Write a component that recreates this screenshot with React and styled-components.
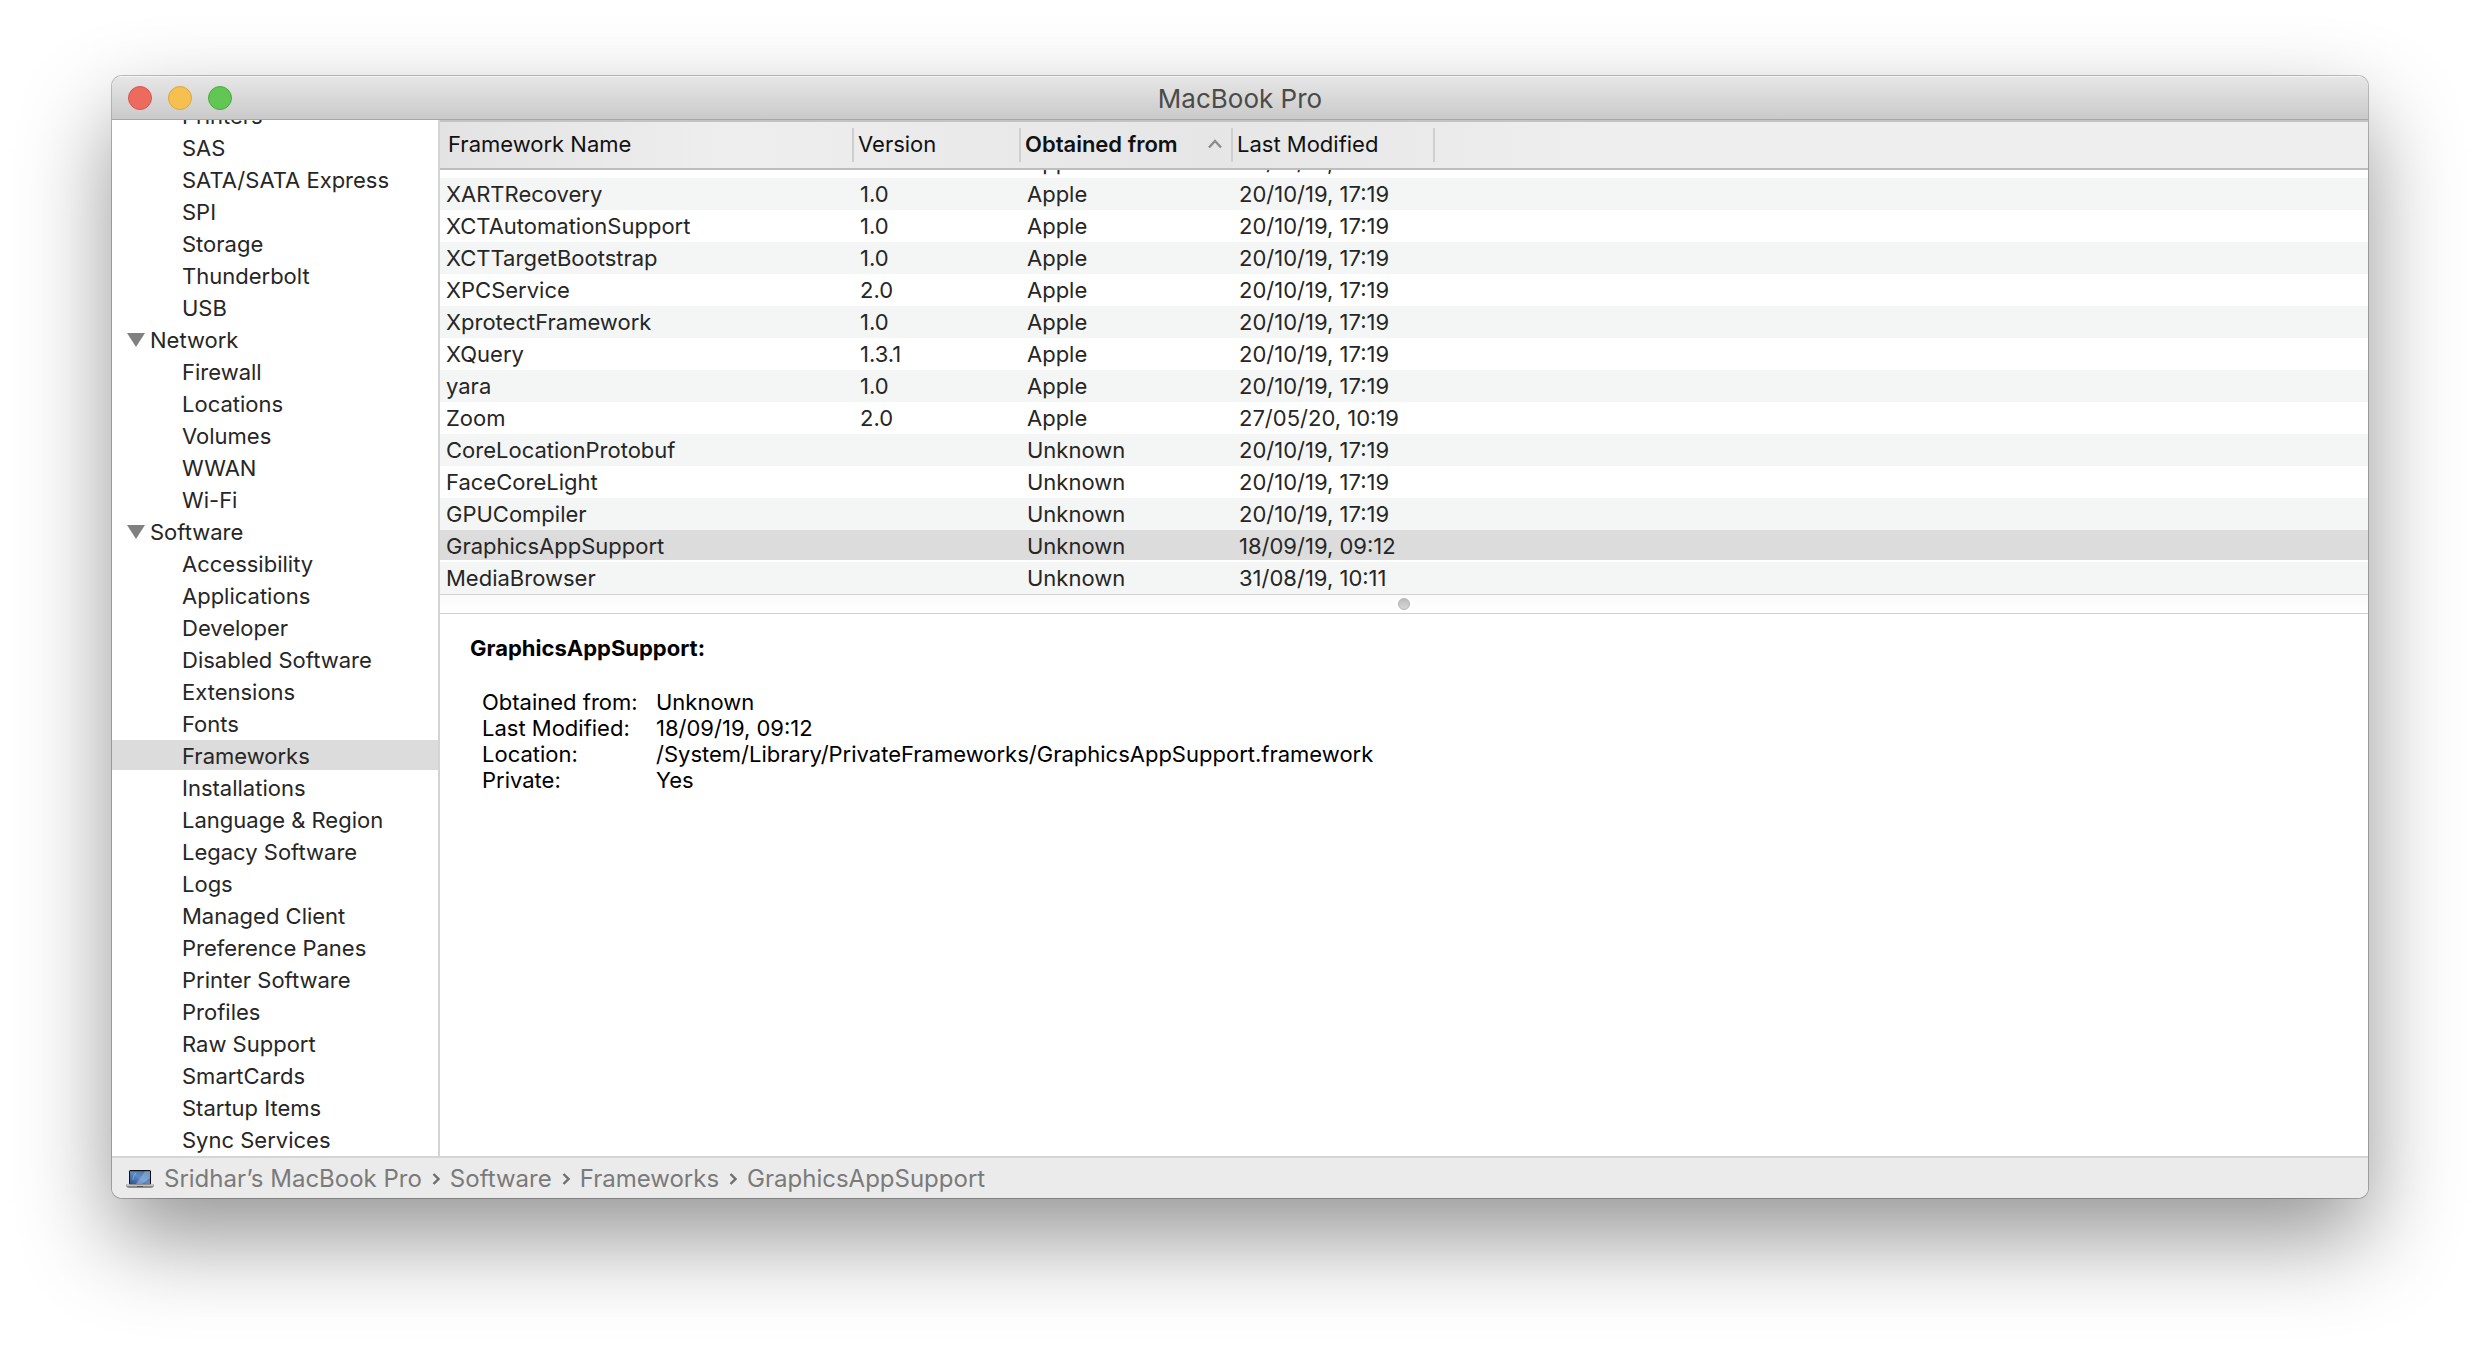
import React from "react";
import styled, { createGlobalStyle, css } from "styled-components";

const GlobalStyle = createGlobalStyle`
  *, *::before, *::after { box-sizing: border-box; }
  body {
    margin: 0;
    background: #fff;
    font-family: Inter, "Noto Sans", sans-serif;
    font-size: 22px;
    line-height: 32px;
    color: #262626;
  }
  button {
    font: inherit;
    color: inherit;
    background: none;
    border: 0;
    padding: 0;
    text-align: left;
  }
  ul, ol, dl, dd, h1, h2 { margin: 0; padding: 0; list-style: none; }
`;

const Desktop = styled.div`
  display: flex;
  height: 100vh;
  min-height: 600px;
  padding: 76px 112px 148px;
  overflow: hidden;
`;

const Window = styled.div`
  flex: 1;
  min-width: 0;
  display: flex;
  flex-direction: column;
  border-radius: 10px;
  background: #fff;
  overflow: hidden;
  box-shadow: 0 0 0 1px rgba(0, 0, 0, 0.24), 0 40px 92px rgba(0, 0, 0, 0.42);
`;

const TitleBar = styled.header`
  flex: none;
  display: grid;
  grid-template-columns: 1fr auto 1fr;
  align-items: center;
  height: 44px;
  padding: 0 16px;
  background: linear-gradient(#e6e6e6, #cacaca);
  border-top: 1px solid #f4f4f4;
  border-bottom: 1px solid #a6a6a6;
`;

const Lights = styled.div`
  display: flex;
  gap: 16px;
`;

const Light = styled.button`
  width: 24px;
  height: 24px;
  border-radius: 50%;
  background: ${(p) => p.$fill};
  border: 1px solid ${(p) => p.$edge};
`;

const Title = styled.h1`
  padding-top: 2px;
  font-size: 26px;
  font-weight: 400;
  color: #4a4a4a;
`;

const Body = styled.div`
  flex: 1;
  min-height: 0;
  display: flex;
`;

const Sidebar = styled.nav`
  flex: none;
  width: 328px;
  display: flex;
  flex-direction: column;
  justify-content: flex-end;
  overflow: hidden;
  border-right: 2px solid #d4d4d4;
`;

const SideItem = styled.button`
  display: block;
  width: 100%;
  height: 32px;
  padding-left: 70px;
  border-bottom: 2px solid #fff;
  line-height: 32px;
  white-space: nowrap;
  ${(p) => p.$active && css`background: #dcdcdc;`}
`;

const SideGroup = styled(SideItem)`
  display: flex;
  align-items: center;
  gap: 5px;
  padding-left: 15px;
  border-bottom: 0;
`;

const Main = styled.main`
  flex: 1;
  min-width: 0;
  display: flex;
  flex-direction: column;
`;

const Table = styled.table`
  flex: none;
  display: flex;
  flex-direction: column;
  height: 474px;
`;

const Columns = css`
  display: grid;
  grid-template-columns: 414px 167px 212px 202px 1fr;
`;

const Head = styled.thead`
  flex: none;
  display: block;
  border-top: 2px solid #c3c3c3;
  border-bottom: 2px solid #bdbdbd;
  background: linear-gradient(90deg, #e3e3e3, #eeeeee 15%, #e9e9e9 30%, #e6e6e6 40%, #eeeeee 60%);
`;

const HeadRow = styled.tr`
  ${Columns}
  height: 46px;
  align-items: center;
`;

const HeadCell = styled.th`
  display: flex;
  height: 34px;
  padding: 0 8px 2px ${(p) => (p.$first ? 8 : 4)}px;
  border-right: 2px solid #cfcfcf;
  text-align: left;
  font-weight: ${(p) => (p.$sorted ? 600 : 400)};
  color: #111;
`;

const SortButton = styled.button`
  flex: 1;
  display: flex;
  align-items: center;
  justify-content: space-between;
  white-space: nowrap;
`;

const Rows = styled.tbody`
  flex: 1;
  min-height: 0;
  display: flex;
  flex-direction: column;
  justify-content: flex-end;
  overflow: hidden;
`;

const Row = styled.tr`
  ${Columns}
  flex: none;
  height: 32px;
  background: ${(p) => (p.$striped ? "#f4f5f5" : "#fff")};
  ${(p) => p.$selected && css`
    background: #dcdcdc;
    border-bottom: 2px solid #fff;
  `}
`;

const Cell = styled.td`
  padding: 0 6px;
  line-height: 32px;
  white-space: nowrap;
`;

const Splitter = styled.div`
  flex: none;
  display: flex;
  align-items: center;
  justify-content: center;
  height: 20px;
  border-top: 1px solid #d0d0d0;
  border-bottom: 1px solid #d0d0d0;
  background: linear-gradient(#fafafa, #fff);
`;

const Knob = styled.span`
  width: 12px;
  height: 12px;
  border-radius: 50%;
  border: 1px solid #b4b4b4;
  background: linear-gradient(#bcbcbc, #d6d6d6);
`;

const Detail = styled.section`
  flex: 1;
  min-height: 0;
  padding: 18px 30px;
  color: #000;
`;

const DetailTitle = styled.h2`
  font-size: 22px;
  font-weight: 700;
  line-height: 32px;
`;

const Facts = styled.dl`
  display: grid;
  grid-template-columns: 174px 1fr;
  padding: 25px 12px 0;
  line-height: 26px;
`;

const Footer = styled.footer`
  flex: none;
  height: 42px;
  padding: 2px 14px 0;
  display: flex;
  align-items: center;
  gap: 10px;
  border-top: 2px solid #d4d4d4;
  background: #ebebeb;
`;

const Crumbs = styled.ol`
  display: flex;
  align-items: center;
  gap: 10px;
  font-size: 24px;
  color: #7a7a7a;
`;

const Crumb = styled.li`
  display: flex;
  align-items: center;
  gap: 10px;
`;

const Triangle = () => (
  <svg width="18" height="14" viewBox="0 0 18 14" aria-hidden="true">
    <path d="M0 0h18L9 14z" fill="#808080" />
  </svg>
);

const SortArrow = () => (
  <svg width="16" height="10" viewBox="0 0 16 10" fill="none" aria-hidden="true">
    <path d="M2 8.5 8 2l6 6.500" stroke="#8c8c8c" strokeWidth="2.4" />
  </svg>
);

const Chevron = () => (
  <svg width="8" height="12" viewBox="0 0 8 12" fill="none" aria-hidden="true">
    <path d="M1.500 1 6.500 6l-5 5" stroke="#6e6e6e" strokeWidth="2.4" />
  </svg>
);

const Laptop = () => (
  <svg width="28" height="18" viewBox="0 0 28 18" aria-hidden="true">
    <defs>
      <linearGradient id="screen" x1="0" y1="1" x2="1" y2="0">
        <stop offset="0" stopColor="#2c4f94" />
        <stop offset="0.5" stopColor="#5f8cc4" />
        <stop offset="1" stopColor="#3f6aa8" />
      </linearGradient>
    </defs>
    <rect x="3" y="0" width="22" height="15" rx="1.500" fill="#111" />
    <rect x="4" y="1.200" width="20" height="12.800" fill="url(#screen)" />
    <path d="M10 14 19 1.200h5V8l-8 6z" fill="#a9c8e6" opacity="0.45" />
    <path d="M7 10c0-4 2-6 3-7" stroke="#a9c8e6" strokeWidth="1" fill="none" opacity="0.6" />
    <path d="M0 14.500h28v1.500q-1 2-3 2H3q-2 0-3-2z" fill="#8a8a8a" />
    <path d="M0.500 14.500h27v1.300h-27z" fill="#d2d2d2" />
    <path d="M11 16h6v1h-6z" fill="#555" />
  </svg>
);

const tree = [
  { name: "Hardware", items: ["Printers", "SAS", "SATA/SATA Express", "SPI", "Storage", "Thunderbolt", "USB"], scrolled: true },
  { name: "Network", items: ["Firewall", "Locations", "Volumes", "WWAN", "Wi-Fi"] },
  {
    name: "Software",
    items: [
      "Accessibility", "Applications", "Developer", "Disabled Software", "Extensions", "Fonts",
      "Frameworks", "Installations", "Language & Region", "Legacy Software", "Logs",
      "Managed Client", "Preference Panes", "Printer Software", "Profiles", "Raw Support",
      "SmartCards", "Startup Items", "Sync Services",
    ],
  },
];

const autumn = "20/10/19, 17:19";
const frameworks = [
  ["WorkflowKit", "1.0", "Apple", autumn],
  ["XARTRecovery", "1.0", "Apple", autumn],
  ["XCTAutomationSupport", "1.0", "Apple", autumn],
  ["XCTTargetBootstrap", "1.0", "Apple", autumn],
  ["XPCService", "2.0", "Apple", autumn],
  ["XprotectFramework", "1.0", "Apple", autumn],
  ["XQuery", "1.3.1", "Apple", autumn],
  ["yara", "1.0", "Apple", autumn],
  ["Zoom", "2.0", "Apple", "27/05/20, 10:19"],
  ["CoreLocationProtobuf", "", "Unknown", autumn],
  ["FaceCoreLight", "", "Unknown", autumn],
  ["GPUCompiler", "", "Unknown", autumn],
  ["GraphicsAppSupport", "", "Unknown", "18/09/19, 09:12"],
  ["MediaBrowser", "", "Unknown", "31/08/19, 10:11"],
];

const headings = ["Framework Name", "Version", "Obtained from", "Last Modified"];
const selected = "GraphicsAppSupport";

const facts = [
  ["Obtained from:", "Unknown"],
  ["Last Modified:", "18/09/19, 09:12"],
  ["Location:", "/System/Library/PrivateFrameworks/GraphicsAppSupport.framework"],
  ["Private:", "Yes"],
];

const path = ["Sridhar’s MacBook Pro", "Software", "Frameworks", selected];

export default function App() {
  return (
    <Desktop>
      <GlobalStyle />
      <Window>
        <TitleBar>
          <Lights>
            <Light aria-label="Close" $fill="#ed6a5e" $edge="#d8574d" />
            <Light aria-label="Minimize" $fill="#f5c04f" $edge="#dca63c" />
            <Light aria-label="Zoom" $fill="#61c654" $edge="#4dab42" />
          </Lights>
          <Title>MacBook Pro</Title>
        </TitleBar>
        <Body>
          <Sidebar aria-label="Categories">
            {tree.map((group) => (
              <div key={group.name}>
                {!group.scrolled && (
                  <SideGroup aria-expanded="true">
                    <Triangle />
                    {group.name}
                  </SideGroup>
                )}
                <ul>
                  {group.items.map((item) => (
                    <li key={item}>
                      <SideItem $active={item === "Frameworks"}>{item}</SideItem>
                    </li>
                  ))}
                </ul>
              </div>
            ))}
          </Sidebar>
          <Main>
            <Table>
              <Head>
                <HeadRow>
                  {headings.map((h, i) => (
                    <HeadCell key={h} scope="col" $first={i === 0} $sorted={i === 2}>
                      <SortButton>
                        {h}
                        {i === 2 && <SortArrow />}
                      </SortButton>
                    </HeadCell>
                  ))}
                </HeadRow>
              </Head>
              <Rows>
                {frameworks.map((row, i) => (
                  <Row key={row[0]} $striped={i % 2 === 1} $selected={row[0] === selected}>
                    {row.map((value, c) => (
                      <Cell key={c}>{value}</Cell>
                    ))}
                  </Row>
                ))}
              </Rows>
            </Table>
            <Splitter role="separator" aria-orientation="horizontal">
              <Knob />
            </Splitter>
            <Detail>
              <DetailTitle>{selected}:</DetailTitle>
              <Facts>
                {facts.map(([label, value]) => (
                  <React.Fragment key={label}>
                    <dt>{label}</dt>
                    <dd>{value}</dd>
                  </React.Fragment>
                ))}
              </Facts>
            </Detail>
          </Main>
        </Body>
        <Footer>
          <Laptop />
          <Crumbs>
            {path.map((step, i) => (
              <Crumb key={step}>
                {i > 0 && <Chevron />}
                {step}
              </Crumb>
            ))}
          </Crumbs>
        </Footer>
      </Window>
    </Desktop>
  );
}
